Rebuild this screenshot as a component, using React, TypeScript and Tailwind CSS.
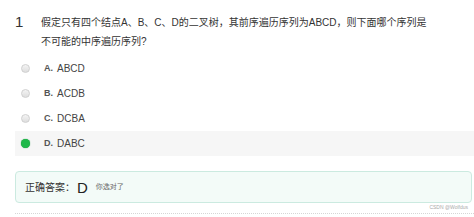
import React from 'react';

const options = [
  { key: 'A', text: 'ABCD' },
  { key: 'B', text: 'ACDB' },
  { key: 'C', text: 'DCBA' },
  { key: 'D', text: 'DABC' },
];

export default function App() {
  const picked = 'D';
  return (
    <div
      className="relative w-[474px] h-[217px] bg-white overflow-hidden text-[#333]"
      style={{ fontFamily: '"Liberation Sans", Arial, "Noto Sans CJK SC", sans-serif' }}
    >
      {/* question */}
      <div className="flex pt-[13px] pl-[15px]">
        <div className="w-[26px] text-[15px] leading-[18px] text-[#333]">1</div>
        <div className="text-[10px] leading-[19px] w-[390px]">
          假定只有四个结点A、B、C、D的二叉树，其前序遍历序列为ABCD，则下面哪个序列是不可能的中序遍历序列?
        </div>
      </div>

      {/* options */}
      <div className="mt-[5px] pl-[15px]">
        {options.map((o) => {
          const on = o.key === picked;
          return (
            <div
              key={o.key}
              className={`flex items-center h-[25px] pl-[6px] ${on ? 'bg-[#f6f6f6]' : ''}`}
            >
              {on ? (
                <span className="w-[9px] h-[9px] rounded-full bg-[#20b84a] shadow-[0_0_1px_#0a8a30]" />
              ) : (
                <span className="w-[9px] h-[9px] rounded-full border border-[#d0d0d0] bg-gradient-to-b from-[#f4f4f4] to-[#dedede]" />
              )}
              <span className="ml-[14px] text-[9px] font-bold text-[#555]">{o.key}.</span>
              <span className="ml-[4px] text-[10px] text-[#444]">{o.text}</span>
            </div>
          );
        })}
      </div>

      {/* answer */}
      <div className="mt-[15px] ml-[15px] mr-[2px] h-[32px] rounded-[4px] border border-[#cbeae0] bg-[#f3fbf8] flex items-center pl-[9px]">
        <span className="text-[10px] text-[#333]">正确答案：</span>
        <span className="ml-[2px] text-[15px] leading-none text-[#222]">D</span>
        <span className="ml-[8px] text-[7px] text-[#666]">你选对了</span>
      </div>

      {/* dotted line */}
      <div className="absolute left-[15px] right-0 top-[213px] border-t border-dotted border-[#d6d6d6]" />
      <div className="absolute right-[6px] top-[204px] text-[5px] text-[#aaa]">CSDN @Wolfdus</div>
    </div>
  );
}
